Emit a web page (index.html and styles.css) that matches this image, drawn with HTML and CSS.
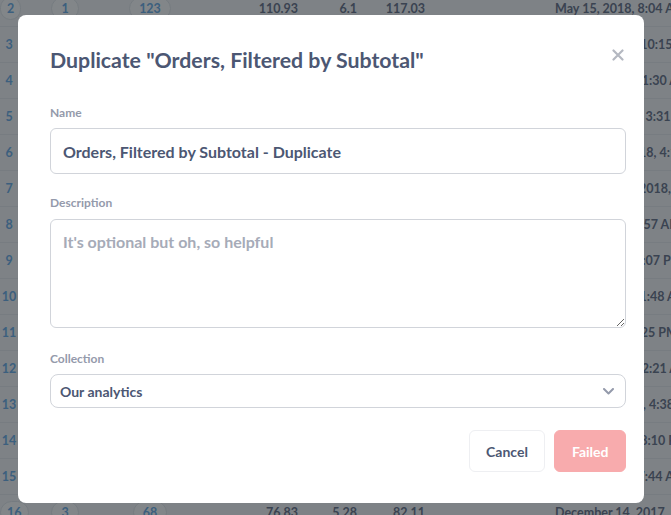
FILE: index.html
```html
<!DOCTYPE html>
<html>
<head>
    <meta name="viewport" content="width=device-width, initial-scale=1.0">
    <title>Duplicate question</title>
    <link rel="stylesheet" href="styles.css">
</head>
<body>
    <!-- table behind the modal -->
    <div class="table">
        <div class="row"><span class="idx"><span class="pill">2</span></span><span class="fk"><span class="pill">1</span></span><span class="fk"><span class="pill">123</span></span><span class="num">110.93</span><span class="num">6.1</span><span class="num">117.03</span><span></span><span class="date">May 15, 2018, 8:04 AM</span></div>
        <div class="row"><span class="idx">3</span><span class="fk"><span class="pill">1</span></span><span class="fk"><span class="pill">123</span></span><span class="num">52.72</span><span class="num">2.9</span><span class="num">49.2</span><span></span><span class="date">April 30, 2019, 10:15 PM</span></div>
        <div class="row"><span class="idx">4</span><span class="fk"><span class="pill">1</span></span><span class="fk"><span class="pill">123</span></span><span class="num">109.22</span><span class="num">6.01</span><span class="num">115.23</span><span></span><span class="date">March 1, 2019, 1:30 AM</span></div>
        <div class="row"><span class="idx">5</span><span class="fk"><span class="pill">1</span></span><span class="fk"><span class="pill">123</span></span><span class="num">106.5</span><span class="num">5.86</span><span class="num">112.36</span><span></span><span class="date">August 9, 2017, 3:31 PM</span></div>
        <div class="row"><span class="idx">6</span><span class="fk"><span class="pill">1</span></span><span class="fk"><span class="pill">123</span></span><span class="num">84.11</span><span class="num">4.63</span><span class="num">88.74</span><span></span><span class="date">October 26, 2018, 4:14 AM</span></div>
        <div class="row"><span class="idx">7</span><span class="fk"><span class="pill">1</span></span><span class="fk"><span class="pill">123</span></span><span class="num">85.61</span><span class="num">4.71</span><span class="num">90.32</span><span></span><span class="date">September 18, 2018, 9:20 PM</span></div>
        <div class="row"><span class="idx">8</span><span class="fk"><span class="pill">1</span></span><span class="fk"><span class="pill">123</span></span><span class="num">96.89</span><span class="num">5.33</span><span class="num">102.22</span><span></span><span class="date">April 2, 2019, 5:57 AM</span></div>
        <div class="row"><span class="idx">9</span><span class="fk"><span class="pill">1</span></span><span class="fk"><span class="pill">123</span></span><span class="num">110.93</span><span class="num">6.1</span><span class="num">117.03</span><span></span><span class="date">July 14, 2017, 5:07 PM</span></div>
        <div class="row"><span class="idx">10</span><span class="fk"><span class="pill">1</span></span><span class="fk"><span class="pill">123</span></span><span class="num">68.34</span><span class="num">3.76</span><span class="num">72.1</span><span></span><span class="date">June 3, 2018, 11:48 AM</span></div>
        <div class="row"><span class="idx">11</span><span class="fk"><span class="pill">1</span></span><span class="fk"><span class="pill">123</span></span><span class="num">102.5</span><span class="num">5.64</span><span class="num">108.14</span><span></span><span class="date">May 9, 2018, 6:25 PM</span></div>
        <div class="row"><span class="idx">12</span><span class="fk"><span class="pill">1</span></span><span class="fk"><span class="pill">123</span></span><span class="num">77.41</span><span class="num">4.26</span><span class="num">81.67</span><span></span><span class="date">March 3, 2019, 2:21 AM</span></div>
        <div class="row"><span class="idx">13</span><span class="fk"><span class="pill">1</span></span><span class="fk"><span class="pill">123</span></span><span class="num">58.48</span><span class="num">3.22</span><span class="num">61.7</span><span></span><span class="date">January 4, 2019, 4:38 AM</span></div>
        <div class="row"><span class="idx">14</span><span class="fk"><span class="pill">1</span></span><span class="fk"><span class="pill">123</span></span><span class="num">90.16</span><span class="num">4.96</span><span class="num">95.12</span><span></span><span class="date">April 12, 2017, 8:10 PM</span></div>
        <div class="row"><span class="idx">15</span><span class="fk"><span class="pill">1</span></span><span class="fk"><span class="pill">123</span></span><span class="num">73.99</span><span class="num">4.07</span><span class="num">78.06</span><span></span><span class="date">May 21, 2017, 7:44 AM</span></div>
        <div class="row"><span class="idx"><span class="pill">16</span></span><span class="fk"><span class="pill">3</span></span><span class="fk"><span class="pill">68</span></span><span class="num">76.83</span><span class="num">5.28</span><span class="num">82.11</span><span></span><span class="date">December 14, 2017, 1:22 PM</span></div>
    </div>

    <div class="overlay">
        <div class="modal">
            <div class="modal-header">
                <h2>Duplicate "Orders, Filtered by Subtotal"</h2>
                <svg class="close" width="12" height="12" viewBox="0 0 12 12">
                    <path d="M1.5 1.5l9 9M10.5 1.5l-9 9" stroke="#b4b8c1" stroke-width="2.2" stroke-linecap="round"/>
                </svg>
            </div>

            <label class="field-label">Name</label>
            <input class="text-input" type="text" value="Orders, Filtered by Subtotal - Duplicate">

            <label class="field-label label-description">Description</label>
            <textarea class="text-area" placeholder="It's optional but oh, so helpful"></textarea>

            <label class="field-label">Collection</label>
            <div class="select">
                <span>Our analytics</span>
                <svg width="11" height="7" viewBox="0 0 11 7">
                    <path d="M1 1l4.5 4.5L10 1" fill="none" stroke="#949aab" stroke-width="2" stroke-linecap="round" stroke-linejoin="round"/>
                </svg>
            </div>

            <div class="modal-footer">
                <button class="btn">Cancel</button>
                <button class="btn btn-failed">Failed</button>
            </div>
        </div>
    </div>
</body>
</html>
```

FILE: styles.css
```css
body {
    font-family: Lato, "Open Sans", sans-serif;
    margin: 0;
    padding: 0;
    overflow: hidden;
    background-color: #f4f5f7;
}

/* background table */
.table {
    margin-top: -9px;
    color: #4c5773;
    font-size: 12.5px;
    font-weight: 700;
}

.row {
    display: grid;
    grid-template-columns: 18px 94px 76px 110px 59px 68px 130px auto;
    height: 36px;
    align-items: center;
    border-bottom: 1px solid #e4e7ea;
    box-sizing: border-box;
    white-space: nowrap;
}

.idx {
    text-align: center;
    color: #509ee3;
}

.fk {
    text-align: center;
    color: #509ee3;
}

.num {
    text-align: right;
}

.pill {
    display: inline-block;
    padding: 3px 9px;
    border: 1px solid #dfe3e8;
    border-radius: 99px;
    background-color: #fff;
}

.idx .pill {
    padding: 3px 6px;
}

/* modal */
.overlay {
    position: fixed;
    top: 0;
    left: 0;
    right: 0;
    bottom: 0;
    background-color: rgba(46, 53, 59, 0.6);
    padding: 15px 27px 0 18px;
}

.modal {
    background-color: #fff;
    border-radius: 8px;
    padding: 33px 18px 31px 32px;
    display: flex;
    flex-direction: column;
}

.modal-header {
    display: flex;
    justify-content: space-between;
    align-items: flex-start;
}

.modal-header h2 {
    margin: 0;
    font-size: 21.3px;
    line-height: 24px;
    font-weight: 700;
    color: #4c5773;
}

.close {
    margin-top: 1px;
    margin-right: 2px;
}

.field-label {
    display: block;
    font-size: 12px;
    line-height: 15px;
    font-weight: 700;
    color: #949aab;
    margin-top: 21px;
    margin-bottom: 8px;
}

.modal-header + .field-label {
    margin-top: 33px;
}

.label-description {
    margin-bottom: 9px;
}

.text-input,
.text-area {
    display: block;
    box-sizing: border-box;
    width: 100%;
    margin: 0;
    padding: 12px 12px;
    border: 1px solid #d1d4da;
    border-radius: 6px;
    font-family: inherit;
    font-size: 16px;
    line-height: 20px;
    font-weight: 700;
    color: #4c5773;
    outline: none;
}

.text-input {
    height: 46px;
}

.text-area {
    height: 109px;
    resize: vertical;
    margin-bottom: 2px;
}

.text-area::placeholder {
    color: #a6abb8;
}

.select {
    display: flex;
    justify-content: space-between;
    align-items: center;
    box-sizing: border-box;
    height: 34px;
    padding: 0 11px 0 9px;
    border: 1px solid #d1d4da;
    border-radius: 8px;
    font-size: 14px;
    font-weight: 700;
    color: #4c5773;
}

.modal-footer {
    display: flex;
    justify-content: flex-end;
    gap: 9px;
    margin-top: 22px;
}

.btn {
    box-sizing: border-box;
    height: 42px;
    padding: 0 16.5px;
    border: 1px solid #eeeff2;
    border-radius: 6px;
    background-color: #fff;
    font-family: inherit;
    font-size: 14px;
    font-weight: 700;
    color: #4c5773;
    cursor: pointer;
}

.btn-failed {
    background-color: #f8abad;
    border-color: #f8abad;
    color: #fff;
}
```
